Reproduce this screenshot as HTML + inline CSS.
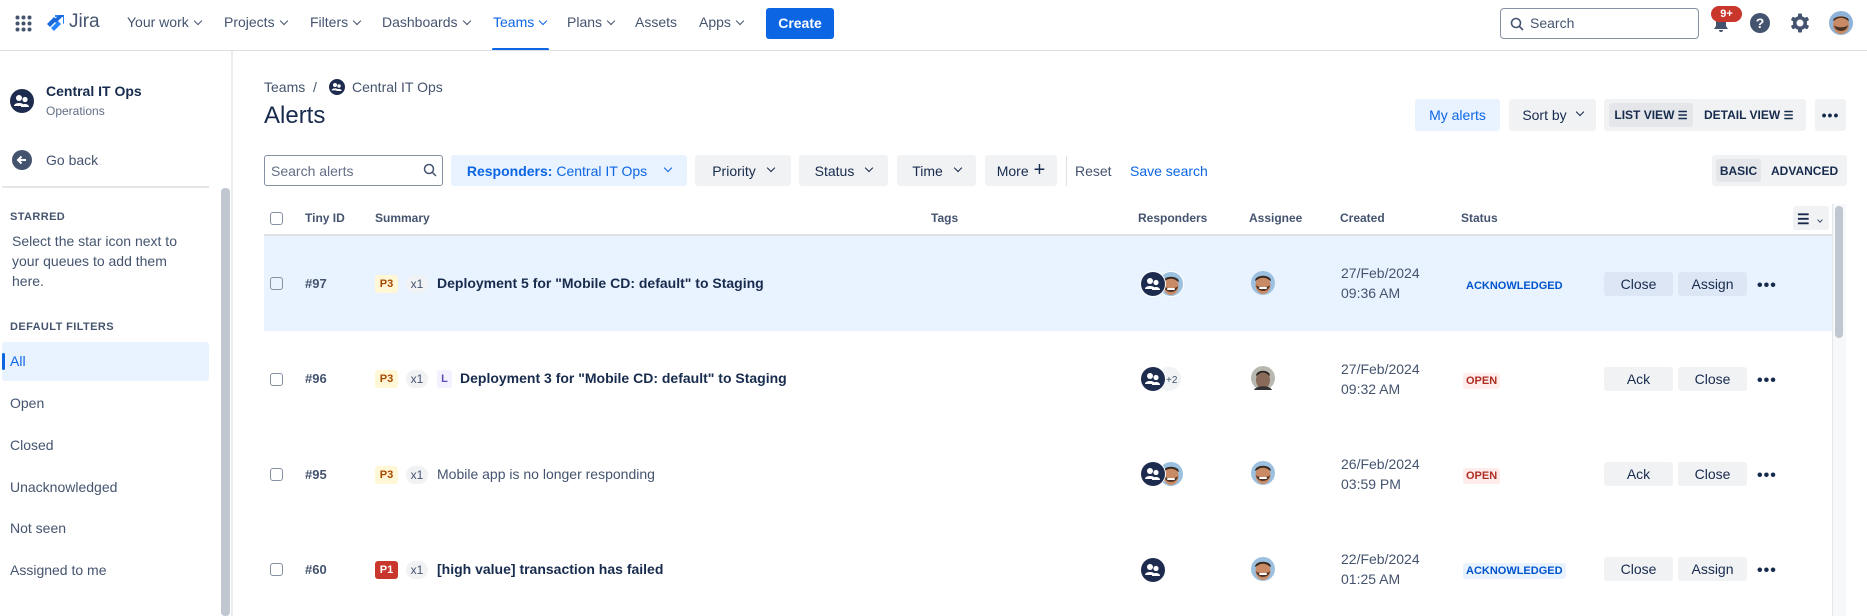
<!DOCTYPE html>
<html><head><meta charset="utf-8"><style>
*{box-sizing:border-box;margin:0;padding:0}
body{width:1867px;height:616px;overflow:hidden;background:#fff;font-family:"Liberation Sans",Arial,sans-serif;color:#172b4d;position:relative}
.a{position:absolute;white-space:nowrap}
.nav{font-size:14px;color:#44546f;top:14px}
.chev{display:inline-block;width:6px;height:6px;border-right:1.5px solid currentColor;border-bottom:1.5px solid currentColor;transform:rotate(45deg);margin-left:6px;position:relative;top:-3px}
.btn{position:absolute;background:#f1f2f4;border-radius:3px;font-size:14px;color:#172b4d;display:flex;align-items:center;justify-content:center}
.side{font-size:14px;color:#44546f;left:10px}
.hd{font-size:12px;color:#44546f;font-weight:bold;top:211px}
.cb{position:absolute;width:13px;height:13px;border:1.5px solid #8590a2;border-radius:3px;left:270px}
.id{font-size:13px;color:#44546f;font-weight:bold;left:305px}
.p3{position:absolute;left:375px;width:23px;height:18px;background:#fff7d6;color:#a54800;font-weight:bold;font-size:11px;border-radius:3px;text-align:center;line-height:18px}
.x1{position:absolute;left:406px;width:22px;height:18px;background:#f1f2f4;color:#44546f;font-size:12px;border-radius:9px;text-align:center;line-height:18px}
.ttl{font-size:14px;color:#172b4d}
.dt{font-size:14px;color:#44546f;line-height:20px;left:1341px}
.st{position:absolute;left:1463px;height:16px;font-size:11px;font-weight:bold;border-radius:3px;line-height:16px;padding:0 3px}
.ack{background:#e9f2ff;color:#0055cc}
.op{background:#ffeceb;color:#ae2e24}
.rb{position:absolute;height:24px;width:69px;background:#f1f2f4;border-radius:3px;font-size:14px;color:#172b4d;text-align:center;line-height:24px}
.dots{position:absolute;left:1757px;font-size:16px;font-weight:bold;letter-spacing:1px;color:#172b4d}
</style></head><body>

<svg class="a" style="left:15px;top:15px" width="17" height="17" viewBox="0 0 17 17" fill="#44546f"><circle cx="2.5" cy="2.5" r="2"/><circle cx="8.5" cy="2.5" r="2"/><circle cx="14.5" cy="2.5" r="2"/><circle cx="2.5" cy="8.5" r="2"/><circle cx="8.5" cy="8.5" r="2"/><circle cx="14.5" cy="8.5" r="2"/><circle cx="2.5" cy="14.5" r="2"/><circle cx="8.5" cy="14.5" r="2"/><circle cx="14.5" cy="14.5" r="2"/></svg>
<svg class="a" style="left:46px;top:14px" width="19" height="19" viewBox="0 0 19 19"><path d="M9 1h9v9a1 1 0 0 1-1-1V3H9z" fill="#2684ff"/><path d="M14 1l4 0-8 8-3-3z" fill="#1868db"/><path d="M1 10l7-7 3 3-7 7z" fill="#1868db"/><path d="M5 14l7-7 3 3-7 7z" fill="#2684ff"/></svg>
<div class="a" style="left:69px;top:11px;font-size:19px;color:#44546f">Jira</div>
<div class="a nav" style="left:127px">Your work<span class="chev"></span></div>
<div class="a nav" style="left:224px">Projects<span class="chev"></span></div>
<div class="a nav" style="left:310px">Filters<span class="chev"></span></div>
<div class="a nav" style="left:382px">Dashboards<span class="chev"></span></div>
<div class="a nav" style="left:493px;color:#0c66e4">Teams<span class="chev"></span></div>
<div class="a" style="left:492px;top:48px;width:57px;height:3px;background:#0c66e4;border-radius:2px"></div>
<div class="a nav" style="left:567px">Plans<span class="chev"></span></div>
<div class="a nav" style="left:635px">Assets</div>
<div class="a nav" style="left:699px">Apps<span class="chev"></span></div>
<div class="a" style="left:766px;top:8px;width:68px;height:31px;background:#0c66e4;border-radius:3px;color:#fff;font-size:14px;font-weight:bold;text-align:center;line-height:31px">Create</div>
<div class="a" style="left:1500px;top:8px;width:199px;height:31px;border:1.5px solid #8590a2;border-radius:4px"></div>
<svg class="a" style="left:1510px;top:17px" width="14" height="14" viewBox="0 0 14 14" fill="none" stroke="#44546f" stroke-width="1.6"><circle cx="6" cy="6" r="4.5"/><path d="M9.5 9.5L13 13"/></svg>
<div class="a" style="left:1530px;top:15px;font-size:14px;color:#44546f">Search</div>
<svg class="a" style="left:1711px;top:14px" width="20" height="20" viewBox="0 0 20 20"><path d="M10 2c-3.5 0-5 2.6-5 5.5V12l-2 3h14l-2-3V7.5C15 4.6 13.5 2 10 2zM8 16a2 2 0 0 0 4 0z" fill="#44546f"/></svg>
<div class="a" style="left:1711px;top:6px;width:31px;height:16px;background:#c9372c;border-radius:8px;color:#fff;font-size:11px;font-weight:bold;text-align:center;line-height:16px">9+</div>
<svg class="a" style="left:1749px;top:12px" width="22" height="22" viewBox="0 0 22 22"><circle cx="11" cy="11" r="10" fill="#44546f"/><text x="11" y="16" text-anchor="middle" font-family="Liberation Sans" font-weight="bold" font-size="14" fill="#fff">?</text></svg>
<svg class="a" style="left:1790px;top:13px" width="20" height="20" viewBox="0 0 20 20"><g fill="#44546f"><circle cx="10" cy="10" r="7"/><rect x="8" y="0.5" width="4" height="19" rx="1"/><rect x="8" y="0.5" width="4" height="19" rx="1" transform="rotate(60 10 10)"/><rect x="8" y="0.5" width="4" height="19" rx="1" transform="rotate(120 10 10)"/></g><circle cx="10" cy="10" r="3.5" fill="#fff"/></svg>
<svg class="a" style="left:1829px;top:11px" width="24" height="24" viewBox="0 0 24 24"><circle cx="12" cy="12" r="12" fill="#8fb3d6"/><ellipse cx="12" cy="14" rx="8" ry="9" fill="#c98a66"/><path d="M4 10c0-6 16-6 16 0l-2-1c-3-3-9-3-12 0z" fill="#3a2a20"/><path d="M5 14c1 8 13 8 14 0c-2 3-12 3-14 0z" fill="#4a3326"/></svg>
<div class="a" style="left:0;top:50px;width:1867px;height:1px;background:#dcdfe4"></div>

<div class="a" style="left:231px;top:51px;width:2px;height:565px;background:#ebecf0"></div>
<svg class="a" style="left:10px;top:89px" width="24" height="24" viewBox="0 0 24 24"><circle cx="12" cy="12" r="12" fill="#1d2b4f"/><circle cx="9" cy="9" r="3" fill="#fff"/><circle cx="15" cy="10.5" r="2.6" fill="#fff"/><path d="M4 17c0-4 10-4 10 0z" fill="#fff"/><path d="M11 18c0-4 8-4 8 0z" fill="#fff"/></svg>
<div class="a" style="left:46px;top:83px;font-size:14px;font-weight:bold">Central IT Ops</div>
<div class="a" style="left:46px;top:104px;font-size:12px;color:#626f86">Operations</div>
<svg class="a" style="left:12px;top:150px" width="20" height="20" viewBox="0 0 20 20"><circle cx="10" cy="10" r="10" fill="#44546f"/><path d="M14 10H6M9.5 6.5L6 10l3.5 3.5" stroke="#fff" stroke-width="2" fill="none"/></svg>
<div class="a" style="left:46px;top:152px;font-size:14px;color:#44546f">Go back</div>
<div class="a" style="left:2px;top:186px;width:207px;height:2px;background:#e4e6ea"></div>
<div class="a" style="left:221px;top:188px;width:9px;height:428px;background:#c1c7d0;border-radius:4px"></div>
<div class="a" style="left:10px;top:211px;font-size:11px;font-weight:bold;color:#44546f;letter-spacing:.4px">STARRED</div>
<div class="a" style="left:12px;top:231px;font-size:14px;color:#44546f;line-height:20px;white-space:normal;width:190px">Select the star icon next to your queues to add them here.</div>
<div class="a" style="left:10px;top:321px;font-size:11px;font-weight:bold;color:#44546f;letter-spacing:.4px">DEFAULT FILTERS</div>
<div class="a" style="left:2px;top:342px;width:207px;height:39px;background:#e9f2ff;border-radius:3px"></div>
<div class="a" style="left:2px;top:353px;width:3px;height:17px;background:#0c66e4;border-radius:2px"></div>
<div class="a side" style="top:353px;color:#0c66e4">All</div>
<div class="a side" style="top:395px">Open</div>
<div class="a side" style="top:437px">Closed</div>
<div class="a side" style="top:479px">Unacknowledged</div>
<div class="a side" style="top:520px">Not seen</div>
<div class="a side" style="top:562px">Assigned to me</div>

<div class="a" style="left:264px;top:79px;font-size:14px;color:#44546f">Teams&nbsp;&nbsp;/</div>
<svg class="a" style="left:329px;top:79px" width="16" height="16" viewBox="0 0 24 24"><circle cx="12" cy="12" r="12" fill="#1d2b4f"/><circle cx="9" cy="9" r="3" fill="#fff"/><circle cx="15" cy="10.5" r="2.6" fill="#fff"/><path d="M4 17c0-4 10-4 10 0z" fill="#fff"/><path d="M11 18c0-4 8-4 8 0z" fill="#fff"/></svg>
<div class="a" style="left:352px;top:79px;font-size:14px;color:#44546f">Central IT Ops</div>
<div class="a" style="left:264px;top:102px;font-size:24px;font-weight:500">Alerts</div>

<div class="btn" style="left:1415px;top:99px;width:85px;height:32px;background:#e9f2ff;color:#0c66e4">My alerts</div>
<div class="btn" style="left:1509px;top:99px;width:87px;height:32px">Sort by<span class="chev" style="margin-left:10px"></span></div>
<div class="btn" style="left:1604px;top:99px;width:202px;height:32px"></div>
<div class="btn" style="left:1609px;top:103px;width:84px;height:24px;background:#e4e6ea;font-size:12px;font-weight:bold">LIST VIEW&nbsp;<span style="font-size:11px">☰</span></div>
<div class="a" style="left:1704px;top:108px;font-size:12px;font-weight:bold">DETAIL VIEW <span style="font-size:11px">☰</span></div>
<div class="btn" style="left:1815px;top:99px;width:31px;height:32px;font-weight:bold;letter-spacing:1px">•••</div>

<div class="a" style="left:264px;top:155px;width:179px;height:31px;border:1.5px solid #8590a2;border-radius:3px"></div>
<div class="a" style="left:271px;top:163px;font-size:14px;color:#626f86">Search alerts</div>
<svg class="a" style="left:423px;top:163px" width="14" height="14" viewBox="0 0 14 14" fill="none" stroke="#44546f" stroke-width="1.5"><circle cx="6" cy="6" r="4.5"/><path d="M9.5 9.5L13 13"/></svg>
<div class="btn" style="left:451px;top:155px;width:236px;height:31px;background:#e9f2ff;color:#0c66e4"><b>Responders:</b>&nbsp;Central IT Ops<span class="chev" style="margin-left:18px"></span></div>
<div class="btn" style="left:695px;top:155px;width:96px;height:31px">Priority<span class="chev" style="margin-left:12px"></span></div>
<div class="btn" style="left:799px;top:155px;width:89px;height:31px">Status<span class="chev" style="margin-left:12px"></span></div>
<div class="btn" style="left:897px;top:155px;width:79px;height:31px">Time<span class="chev" style="margin-left:12px"></span></div>
<div class="btn" style="left:985px;top:155px;width:72px;height:31px">More <span style="font-size:20px;margin-left:5px;font-weight:300">+</span></div>
<div class="a" style="left:1066px;top:156px;width:1px;height:30px;background:#dcdfe4"></div>
<div class="a" style="left:1075px;top:163px;font-size:14px;color:#44546f">Reset</div>
<div class="a" style="left:1130px;top:163px;font-size:14px;color:#0c66e4">Save search</div>
<div class="btn" style="left:1712px;top:155px;width:135px;height:31px"></div>
<div class="btn" style="left:1716px;top:159px;width:45px;height:23px;background:#e4e6ea;font-size:12px;font-weight:bold">BASIC</div>
<div class="a" style="left:1771px;top:164px;font-size:12px;font-weight:bold">ADVANCED</div>

<div class="cb" style="top:212px"></div>
<div class="a hd" style="left:305px">Tiny ID</div>
<div class="a hd" style="left:375px">Summary</div>
<div class="a hd" style="left:931px">Tags</div>
<div class="a hd" style="left:1138px">Responders</div>
<div class="a hd" style="left:1249px">Assignee</div>
<div class="a hd" style="left:1340px">Created</div>
<div class="a hd" style="left:1461px">Status</div>
<div class="a" style="left:1793px;top:206px;width:36px;height:24px;background:#f1f2f4;border-radius:3px"></div>
<div class="a" style="left:1797px;top:211px;font-size:14px;font-weight:bold">☰</div>
<div class="a" style="left:1818px;top:212px;color:#44546f"><span class="chev" style="width:4px;height:4px;margin:0"></span></div>
<div class="a" style="left:264px;top:234px;width:1568px;height:2px;background:#dcdfe4"></div>
<div class="a" style="left:1832px;top:204px;width:14px;height:412px;background:#f7f8f9;border-left:1px solid #e4e6ea"></div>
<div class="a" style="left:1835px;top:206px;width:8px;height:132px;background:#c1c7d0;border-radius:4px"></div>

<div class="a" style="left:264px;top:236px;width:1568px;height:95px;background:#e9f2ff"></div>

<svg width="0" height="0" style="position:absolute"><defs>
<g id="team"><circle cx="12" cy="12" r="12" fill="#1d2b4f"/><circle cx="9" cy="9" r="3" fill="#fff"/><circle cx="15" cy="10.5" r="2.6" fill="#fff"/><path d="M4 17c0-4 10-4 10 0z" fill="#fff"/><path d="M11 18c0-4 8-4 8 0z" fill="#fff"/></g>
<g id="face"><circle cx="12" cy="12" r="12" fill="#9cc0e0"/><ellipse cx="12" cy="14" rx="7.5" ry="9" fill="#c98a66"/><path d="M4 10c0-7 16-7 16 0l-2-1c-3-3-9-3-12 0z" fill="#3a2a20"/><path d="M5 14c1 8 13 8 14 0c-2 3-12 3-14 0z" fill="#4a3326"/><rect x="8" y="16" width="8" height="2" rx="1" fill="#fff"/></g>
</defs></svg>

<div class="cb" style="top:277px"></div>
<div class="a id" style="top:276px">#97</div>
<div class="p3" style="top:275px">P3</div>
<div class="x1" style="top:275px">x1</div>
<div class="a ttl" style="left:437px;top:275px;font-weight:bold">Deployment 5 for "Mobile CD: default" to Staging</div>
<svg class="a" style="left:1140px;top:271px" width="50" height="26"><circle cx="31" cy="13" r="13" fill="#fff"/><use href="#face" x="19" y="1"/><circle cx="13" cy="13" r="13" fill="#fff"/><use href="#team" x="1" y="1"/></svg>
<svg class="a" style="left:1251px;top:271px" width="24" height="24"><use href="#face"/></svg>
<div class="a dt" style="top:263px">27/Feb/2024<br>09:36 AM</div>
<div class="st ack" style="top:278px">ACKNOWLEDGED</div>
<div class="rb" style="left:1604px;top:272px;background:#dce6f5">Close</div>
<div class="rb" style="left:1678px;top:272px;background:#dce6f5">Assign</div>
<div class="dots" style="top:277px">•••</div>

<div class="cb" style="top:373px"></div>
<div class="a id" style="top:371px">#96</div>
<div class="p3" style="top:370px">P3</div>
<div class="x1" style="top:370px">x1</div>
<div class="a" style="left:437px;top:370px;width:15px;height:18px;background:#f3f0ff;color:#5e4db2;font-size:11px;font-weight:bold;border-radius:3px;text-align:center;line-height:18px">L</div>
<div class="a ttl" style="left:460px;top:370px;font-weight:bold">Deployment 3 for "Mobile CD: default" to Staging</div>
<svg class="a" style="left:1140px;top:366px" width="50" height="26"><circle cx="29" cy="13" r="12" fill="#f1f2f4"/><text x="26" y="17" font-size="10" font-family="Liberation Sans" fill="#44546f">+2</text><circle cx="13" cy="13" r="13" fill="#fff"/><use href="#team" x="1" y="1"/></svg>
<svg class="a" style="left:1251px;top:366px" width="24" height="24"><circle cx="12" cy="12" r="12" fill="#b8b8b0"/><ellipse cx="12" cy="14" rx="7" ry="9" fill="#8a6a58"/><path d="M5 10c0-7 14-7 14 0l-3-2c-2-2-6-2-8 0z" fill="#2a2522"/><path d="M3 24c2-5 16-5 18 0z" fill="#333"/></svg>
<div class="a dt" style="top:359px">27/Feb/2024<br>09:32 AM</div>
<div class="st op" style="top:373px">OPEN</div>
<div class="rb" style="left:1604px;top:367px">Ack</div>
<div class="rb" style="left:1678px;top:367px">Close</div>
<div class="dots" style="top:372px">•••</div>

<div class="cb" style="top:468px"></div>
<div class="a id" style="top:467px">#95</div>
<div class="p3" style="top:466px">P3</div>
<div class="x1" style="top:466px">x1</div>
<div class="a ttl" style="left:437px;top:466px;color:#44546f">Mobile app is no longer responding</div>
<svg class="a" style="left:1140px;top:461px" width="50" height="26"><circle cx="31" cy="13" r="13" fill="#fff"/><use href="#face" x="19" y="1"/><circle cx="13" cy="13" r="13" fill="#fff"/><use href="#team" x="1" y="1"/></svg>
<svg class="a" style="left:1251px;top:461px" width="24" height="24"><use href="#face"/></svg>
<div class="a dt" style="top:454px">26/Feb/2024<br>03:59 PM</div>
<div class="st op" style="top:468px">OPEN</div>
<div class="rb" style="left:1604px;top:462px">Ack</div>
<div class="rb" style="left:1678px;top:462px">Close</div>
<div class="dots" style="top:467px">•••</div>

<div class="cb" style="top:563px"></div>
<div class="a id" style="top:562px">#60</div>
<div class="p3" style="top:561px;background:#c9372c;color:#fff">P1</div>
<div class="x1" style="top:561px">x1</div>
<div class="a ttl" style="left:437px;top:561px;font-weight:bold">[high value] transaction has failed</div>
<svg class="a" style="left:1140px;top:557px" width="26" height="26"><use href="#team" x="1" y="1"/></svg>
<svg class="a" style="left:1251px;top:557px" width="24" height="24"><use href="#face"/></svg>
<div class="a dt" style="top:549px">22/Feb/2024<br>01:25 AM</div>
<div class="st ack" style="top:563px">ACKNOWLEDGED</div>
<div class="rb" style="left:1604px;top:557px">Close</div>
<div class="rb" style="left:1678px;top:557px">Assign</div>
<div class="dots" style="top:562px">•••</div>

</body></html>
